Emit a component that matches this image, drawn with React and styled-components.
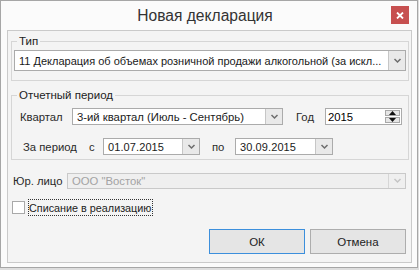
import React from "react";
import styled, { createGlobalStyle } from "styled-components";

const Global = createGlobalStyle`
  html, body { margin: 0; padding: 0; background: #dedede; }
  body { font-family: "Liberation Sans", Arial, sans-serif; font-size: 11.3px; color: #222; }
  * { box-sizing: border-box; }
`;

const Window = styled.div`
  width: 418px;
  height: 268px;
  border: 1px solid #a6a6a6;
  background: #fbfbfb;
  display: flex;
  flex-direction: column;
`;

const TitleBar = styled.div`
  height: 29px;
  display: grid;
  grid-template-columns: 1fr auto 1fr;
  align-items: start;
  padding-right: 8px;
`;

const Title = styled.div`
  grid-column: 2;
  font-size: 15.6px;
  line-height: 29px;
  color: #333;
`;

const CloseButton = styled.div`
  grid-column: 3;
  justify-self: end;
  margin-top: 5px;
  width: 18px;
  height: 18px;
  background: #c75050;
  display: flex;
  align-items: center;
  justify-content: center;
`;

const Panel = styled.div`
  margin: 0 5px 4px 6px;
  flex: 1;
  border: 1px solid #cacaca;
  background: #f4f4f4;
  display: flex;
  flex-direction: column;
  padding: 0 2px 0 3px;
`;

const Group = styled.fieldset`
  margin: ${(p) => p.$mt}px 0 0 0;
  padding: ${(p) => p.$pt}px 2px ${(p) => p.$pb}px 2px;
  border: 1px solid #d6d6d6;
  min-width: 0;
`;

const Legend = styled.legend`
  font-size: 11.5px;
  line-height: 14px;
  padding: 0 2px;
  margin-left: 3px;
  color: #222;
`;

const Combo = styled.div`
  width: ${(p) => p.$w}px;
  height: ${(p) => p.$h}px;
  border: 1px solid ${(p) => (p.$disabled ? "#c9c9c9" : "#ababab")};
  background: ${(p) => (p.$disabled ? "#efefef" : "#fff")};
  display: flex;
  align-items: stretch;
  flex: none;
`;

const ComboText = styled.div`
  flex: 1;
  min-width: 0;
  white-space: nowrap;
  overflow: hidden;
  padding-left: ${(p) => p.$pl ?? 4}px;
  display: flex;
  align-items: center;
  font-size: ${(p) => p.$fs ?? 11.3}px;
  color: ${(p) => (p.$disabled ? "#a3a3a3" : "#1a1a1a")};
  letter-spacing: ${(p) => p.$ls ?? 0}px;
`;

const DropButton = styled.div`
  width: 17px;
  flex: none;
  border-left: 1px solid ${(p) => (p.$disabled ? "#d6d6d6" : "#c6c6c6")};
  background: ${(p) => (p.$disabled ? "#efefef" : "#e9e9e9")};
  display: flex;
  align-items: center;
  justify-content: center;
`;

const Chevron = ({ color = "#6d6d6d" }) => (
  <svg width="9" height="6" viewBox="0 0 9 6">
    <polyline points="1.5,1 4.5,4 7.5,1" fill="none" stroke={color} strokeWidth="1.5" />
  </svg>
);

const ComboBox = ({ w, h = 17, text, disabled, fs, ls, pl }) => (
  <Combo $w={w} $h={h} $disabled={disabled}>
    <ComboText $disabled={disabled} $fs={fs} $ls={ls} $pl={pl}>{text}</ComboText>
    <DropButton $disabled={disabled}>
      <Chevron color={disabled ? "#c4c4c4" : "#6d6d6d"} />
    </DropButton>
  </Combo>
);

const Row = styled.div`
  display: flex;
  align-items: center;
  height: ${(p) => p.$h ?? 17}px;
  margin-top: ${(p) => p.$mt ?? 0}px;
  padding-left: ${(p) => p.$pl ?? 0}px;
`;

const Label = styled.div`
  width: ${(p) => p.$w}px;
  margin-left: ${(p) => p.$ml ?? 0}px;
  flex: none;
  white-space: nowrap;
  color: #2a2a2a;
`;

const Spin = styled.div`
  width: 77px;
  height: 17px;
  border: 1px solid #ababab;
  background: #fff;
  display: flex;
  align-items: center;
  padding-right: 1px;
`;

const SpinText = styled.div`
  flex: 1;
  padding-left: 2px;
  color: #000;
`;

const SpinButtons = styled.div`
  width: 15px;
  height: 13px;
  display: flex;
  flex-direction: column;
  gap: 1px;
`;

const SpinBtn = styled.div`
  flex: 1;
  border: 1px solid #a8a8a8;
  background: #e6e6e6;
  display: flex;
  align-items: center;
  justify-content: center;
`;

const Tri = ({ up }) => (
  <svg width="7" height="4" viewBox="0 0 7 4">
    <polygon points={up ? "0,4 7,4 3.5,0" : "0,0 7,0 3.5,4"} fill="#111" />
  </svg>
);

const CheckRow = styled.div`
  display: flex;
  align-items: center;
  margin-top: 10px;
  padding-left: 1px;
  gap: 3px;
`;

const CheckBox = styled.div`
  width: 13px;
  height: 13px;
  border: 1px solid #a9a9a9;
  background: #fff;
`;

const CheckLabel = styled.div`
  height: 17px;
  padding: 0 1px 0 0;
  border: 1px dotted #333;
  display: flex;
  align-items: center;
  font-size: 10.8px;
  color: #222;
`;

const Buttons = styled.div`
  display: flex;
  justify-content: flex-end;
  gap: 5px;
  margin-top: 13px;
  padding-right: 3px;
`;

const Button = styled.div`
  width: 96px;
  height: 25px;
  border: 1px solid ${(p) => (p.$primary ? "#3c8fdc" : "#adadad")};
  background: #e5e5e5;
  display: flex;
  align-items: center;
  justify-content: center;
  font-size: 11.5px;
  color: #222;
`;

export default function App() {
  return (
    <>
      <Global />
      <Window>
        <TitleBar>
          <Title>Новая декларация</Title>
          <CloseButton>
            <svg width="8" height="7" viewBox="0 0 8 7">
              <path d="M1 0.5 L7 6.5 M7 0.5 L1 6.5" stroke="#fff" strokeWidth="1.8" />
            </svg>
          </CloseButton>
        </TitleBar>
        <Panel>
          <Group $mt={3} $pt={2} $pb={9}>
            <Legend>Тип</Legend>
            <ComboBox
              w={392}
              h={21}
              fs={11}
              text="11 Декларация об объемах розничной продажи алкогольной (за искл..."
            />
          </Group>
          <Group $mt={7} $pt={6} $pb={4}>
            <Legend>Отчетный период</Legend>
            <Row $pl={6}>
              <Label $w={52}>Квартал</Label>
              <ComboBox w={211} text="3-ий квартал (Июль - Сентябрь)" />
              <Label $w={29} $ml={13}>Год</Label>
              <Spin>
                <SpinText>2015</SpinText>
                <SpinButtons>
                  <SpinBtn><Tri up /></SpinBtn>
                  <SpinBtn><Tri /></SpinBtn>
                </SpinButtons>
              </Spin>
            </Row>
            <Row $pl={9} $mt={13}>
              <Label $w={66}>За период</Label>
              <Label $w={14}>с</Label>
              <ComboBox w={97} text="01.07.2015" fs={11} ls={0.1} />
              <Label $w={23} $ml={12}>по</Label>
              <ComboBox w={98} text="30.09.2015" fs={11} ls={0.1} />
            </Row>
          </Group>
          <Row $mt={13} $h={16} $pl={2}>
            <Label $w={54}>Юр. лицо</Label>
            <ComboBox w={339} h={16} text='ООО "Восток"' disabled />
          </Row>
          <CheckRow>
            <CheckBox />
            <CheckLabel>Списание в реализацию</CheckLabel>
          </CheckRow>
          <Buttons>
            <Button $primary>ОК</Button>
            <Button>Отмена</Button>
          </Buttons>
        </Panel>
      </Window>
    </>
  );
}
